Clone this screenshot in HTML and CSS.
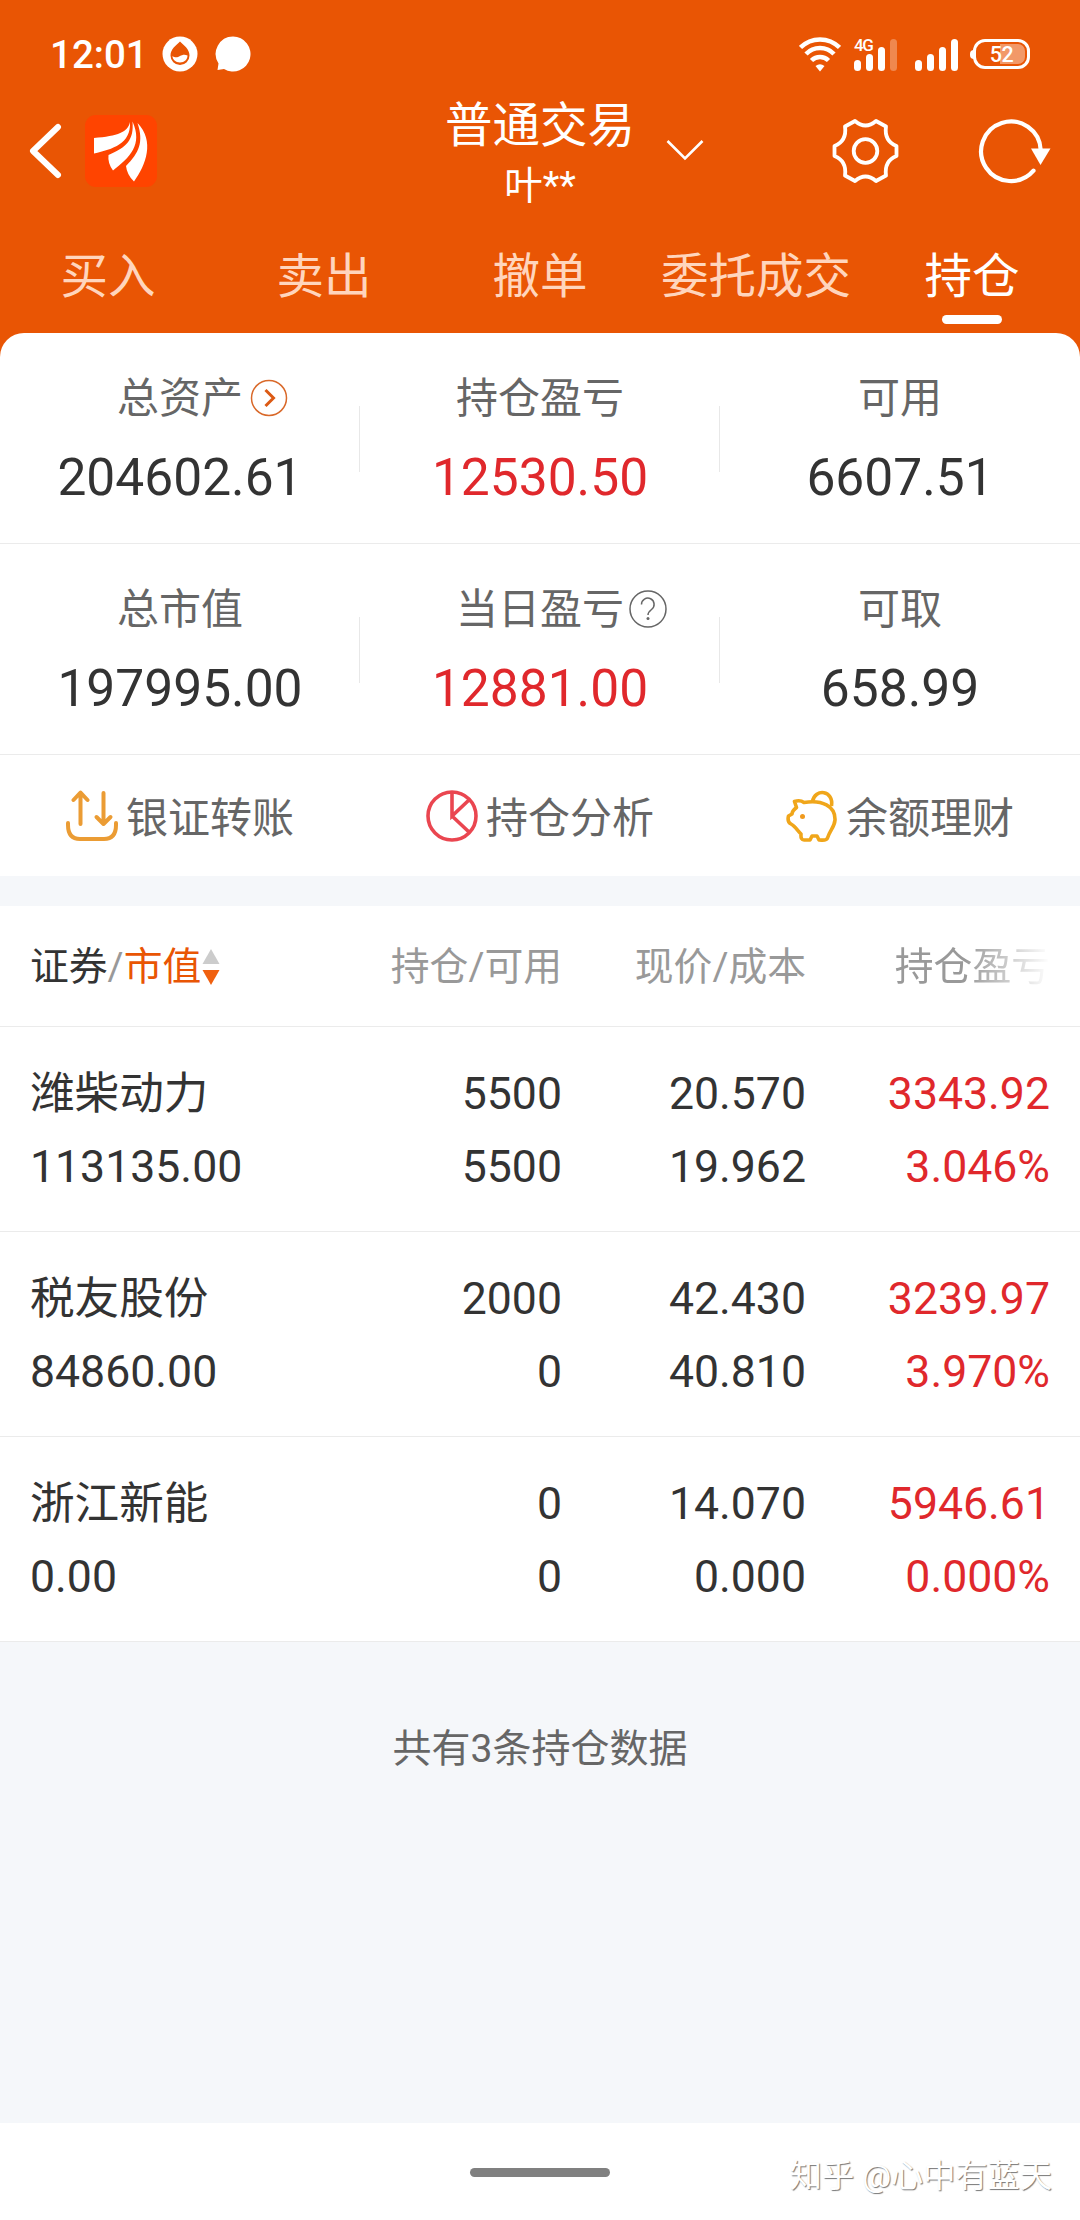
FILE: index.html
```html
<!DOCTYPE html>
<html lang="zh-CN">
<head>
  <meta charset="UTF-8" />
  <meta name="viewport" content="width=device-width, initial-scale=1.0" />
  <title>普通交易 - 持仓</title>
  <link rel="stylesheet" href="styles.css">
</head>
<body>
  <header class="header">
    <div class="status-bar">
      <div class="status-left">
        <span class="clock">12:01</span>
        <svg class="status-dot" viewBox="0 0 36 36">
          <circle cx="18" cy="18" r="17.500" fill="#fff"/>
          <path d="M18 5.500C14 9.500 8.500 13 8.500 19.500a9.500 9.500 0 0 0 19 0C27.500 13 22 9.500 18 5.500z" fill="#e95504"/>
          <path d="M10.500 20c3 2.500 5.500 1 7.500 0s4.500-2 7.500-.5c0 4-3 7-7.500 7s-7.500-3-7.500-6.500z" fill="#fff"/>
        </svg>
        <svg class="status-dot" viewBox="0 0 36 36">
          <path d="M18 .5a17.500 17.500 0 1 1-9 32.500L2.500 34l1-6.500A17.500 17.500 0 0 1 18 .5z" fill="#fff"/>
        </svg>
      </div>
      <div class="status-right">
        <svg class="wifi" viewBox="0 0 42 36">
          <g fill="none" stroke="#fff" stroke-width="4.500">
            <path d="M1.500 11.500a27.500 27.500 0 0 1 39 0"/>
            <path d="M7 18a19.500 19.500 0 0 1 28 0"/>
            <path d="M12.500 24.500a12 12 0 0 1 17 0"/>
          </g>
          <path d="M21 35.500l-4.500-5.500q4.500-3.500 9 0z" fill="#fff"/>
        </svg>
        <div class="signal">
          <span class="net">4G</span>
          <i class="s1"></i><i class="s2"></i><i class="s3"></i><i class="s4 weak"></i>
        </div>
        <div class="signal second">
          <i class="s1"></i><i class="s2"></i><i class="s3"></i><i class="s4"></i>
        </div>
        <div class="battery"><span>52</span></div>
      </div>
    </div>

    <div class="title-bar">
      <div class="title-left">
        <svg class="back" viewBox="0 0 34 56">
          <path d="M30 4L5 28l25 24" fill="none" stroke="#fff" stroke-width="6" stroke-linecap="round" stroke-linejoin="round"/>
        </svg>
        <svg class="logo" viewBox="0 0 72 72">
          <rect width="72" height="72" rx="11" fill="#ff4400"/>
          <path d="M45 7C43 17 33 21 9 23V38.500C28 34 46 29 45 7z" fill="#fff"/>
          <path d="M47.500 6.500C49 25 42 32 23.500 40q-1 8 4.500 15.500C45 42 58 30 47.500 6.500z" fill="#fff"/>
          <path d="M52.500 8C59 27 54 38 41 51q1 9 8 15.500C61 50 70 26 52.500 8z" fill="#fff"/>
        </svg>
      </div>
      <div class="title-center">
        <div class="title">普通交易</div>
        <div class="user">叶**</div>
        <svg class="caret" viewBox="0 0 38 22">
          <path d="M1.500 2L19 19.500 36.500 2" fill="none" stroke="#fff" stroke-width="2.600"/>
        </svg>
      </div>
      <div class="title-right">
        <svg class="gear" viewBox="0 0 68 68">
          <g fill="none" stroke="#fff" stroke-width="3.800" stroke-linejoin="round">
            <circle cx="33.500" cy="34" r="11.800"/>
            <path d="M23 4Q33.500 13 44 4L54 9.500Q52 24 64.500 29V39Q52 44 54 58.500L44 64Q33.500 55 23 64L13 58.500Q15 44 2.500 39V29Q15 24 13 9.500z"/>
          </g>
        </svg>
        <svg class="refresh" viewBox="0 0 74 68">
          <path d="M55.500 53.700A29.800 29.800 0 1 1 62.700 33" fill="none" stroke="#fff" stroke-width="4.200" stroke-linecap="round"/>
          <path d="M53 31.500H72.500L62.500 48z" fill="#fff"/>
        </svg>
      </div>
    </div>

    <nav class="tabs">
      <a class="tab">买入</a>
      <a class="tab">卖出</a>
      <a class="tab">撤单</a>
      <a class="tab">委托成交</a>
      <a class="tab active">持仓</a>
    </nav>
  </header>

  <section class="summary">
    <div class="stats">
      <div class="stat">
        <div class="label">总资产
          <svg class="label-icon more" viewBox="0 0 38 38">
            <circle cx="19" cy="19" r="17.500" fill="none" stroke="#d9692a" stroke-width="1.500"/>
            <path d="M15.500 11l8 8-8 8" fill="none" stroke="#dc5a14" stroke-width="3"/>
          </svg>
        </div>
        <div class="value">204602.61</div>
      </div>
      <div class="stat">
        <div class="label">持仓盈亏</div>
        <div class="value red">12530.50</div>
      </div>
      <div class="stat">
        <div class="label">可用</div>
        <div class="value">6607.51</div>
      </div>
    </div>
    <div class="stats">
      <div class="stat">
        <div class="label">总市值</div>
        <div class="value">197995.00</div>
      </div>
      <div class="stat">
        <div class="label">当日盈亏
          <svg class="label-icon help" viewBox="0 0 38 38">
            <g fill="none" stroke="#666" stroke-width="1.500">
              <circle cx="19" cy="19" r="18"/>
              <path d="M12.500 14.500a6.300 6.300 0 1 1 10 5c-2.500 2-3.500 3-3.500 5.500"/>
            </g>
            <circle cx="19" cy="28.500" r="1.500" fill="#666"/>
          </svg>
        </div>
        <div class="value red">12881.00</div>
      </div>
      <div class="stat">
        <div class="label">可取</div>
        <div class="value">658.99</div>
      </div>
    </div>
    <div class="actions">
      <a class="action">
        <svg viewBox="0 0 52 52">
          <g fill="none" stroke="#eb9c34" stroke-width="4" stroke-linecap="round" stroke-linejoin="round">
            <path d="M2 33v2q0 14 12 14h24q12 0 12-14v-2"/>
            <path d="M14.500 34V3M7.500 10l7-7.500 7 7.500"/>
            <path d="M37.500 3v31M30.500 27l7 7 7-7"/>
          </g>
        </svg>
        <span>银证转账</span>
      </a>
      <a class="action">
        <svg viewBox="0 0 52 52">
          <g fill="none" stroke="#ea4650" stroke-width="3.600">
            <circle cx="26" cy="26" r="24"/>
            <path d="M26 2v24l17.500-16.500M26 26l17.500 16.500"/>
          </g>
        </svg>
        <span>持仓分析</span>
      </a>
      <a class="action">
        <svg viewBox="0 0 52 52">
          <g fill="none" stroke="#f0a61a" stroke-width="3.600" stroke-linejoin="round">
            <path d="M8.500 11.500Q14 9.500 18 12.500C36 9.500 49.500 16 49 30 48.500 37 44 40 41.500 48 40.500 51 37 50 33 50L31 46H26L24 50H18Q14.500 50 15 44C11 40 9 36 5 34Q1 32 2.500 26L6 24Q6 21 10.500 17.500z"/>
            <path d="M26.500 11.500C29-2 48 0 45.500 16"/>
          </g>
          <circle cx="16.500" cy="26.500" r="2.500" fill="#f09a1e"/>
        </svg>
        <span>余额理财</span>
      </a>
    </div>
  </section>

  <section class="holdings">
    <div class="row head">
      <div class="sort"><span class="dark">证券</span>/<span class="orange">市值</span>
        <svg viewBox="0 0 18 36">
          <path d="M9 0l8.500 15H.5z" fill="#ccc"/>
          <path d="M9 36L.5 21h17z" fill="#f0600f"/>
        </svg>
      </div>
      <div>持仓/可用</div>
      <div>现价/成本</div>
      <div class="fade">持仓盈亏</div>
    </div>
    <div class="row">
      <div>潍柴动力<br>113135.00</div>
      <div>5500<br>5500</div>
      <div>20.570<br>19.962</div>
      <div class="red">3343.92<br>3.046%</div>
    </div>
    <div class="row">
      <div>税友股份<br>84860.00</div>
      <div>2000<br>0</div>
      <div>42.430<br>40.810</div>
      <div class="red">3239.97<br>3.970%</div>
    </div>
    <div class="row">
      <div>浙江新能<br>0.00</div>
      <div>0<br>0</div>
      <div>14.070<br>0.000</div>
      <div class="red">5946.61<br>0.000%</div>
    </div>
  </section>

  <p class="total">共有3条持仓数据</p>

  <footer class="nav-bar">
    <div class="home-bar"></div>
    <span class="watermark">知乎 @心中有蓝天</span>
  </footer>
</body>
</html>
```

FILE: styles.css
```css
* {
  box-sizing: border-box;
}
body {
  margin: 0;
  width: 1080px;
  height: 2220px;
  display: flex;
  flex-direction: column;
  font-family: Roboto, 'Noto Sans CJK SC', sans-serif;
  background: #f5f7fa;
  color: #333;
}
svg {
  display: block;
  flex: none;
}
.red {
  color: #e0282c;
}

/* header */
.header {
  height: 357px;
  background: #e95504;
  color: #fff;
}
.status-bar {
  height: 108px;
  padding: 0 50px 0 50px;
  display: flex;
  justify-content: space-between;
  align-items: center;
}
.status-left, .status-right {
  display: flex;
  align-items: center;
}
.clock {
  width: 112px;
  font-size: 38.5px;
  font-weight: 500;
}
.status-dot {
  width: 36px;
  height: 36px;
  margin-right: 17px;
}
.wifi {
  width: 42px;
  height: 36px;
  margin-right: 13px;
}
.signal {
  position: relative;
  display: flex;
  align-items: flex-end;
  gap: 5px;
  height: 33px;
  margin-right: 18px;
}
.signal i {
  width: 7px;
  border-radius: 3.5px;
  background: #fff;
}
.signal.second {
  margin-right: 15px;
}
.s1 { height: 11px; }
.s2 { height: 17px; }
.s3 { height: 24px; }
.s4 { height: 32px; }
.signal .weak {
  opacity: 0.3;
}
.net {
  position: absolute;
  left: 0;
  top: -1px;
  font-size: 17px;
  line-height: 16px;
  font-weight: 500;
  letter-spacing: -1.5px;
}
.battery {
  position: relative;
  width: 57px;
  height: 30px;
  border: 3px solid #fff;
  border-radius: 12px;
  font-size: 21.5px;
  font-weight: 500;
  line-height: 25px;
  text-align: center;
}
.battery span {
  position: relative;
  z-index: 1;
  letter-spacing: -0.5px;
}
.battery::before {
  content: '';
  position: absolute;
  left: -6px;
  top: 8px;
  width: 4px;
  height: 9px;
  border-radius: 4px 0 0 4px;
  background: #fff;
}
.battery::after {
  content: '';
  position: absolute;
  right: 2px;
  top: 2px;
  width: 25px;
  height: 20px;
  border-radius: 0 7px 7px 0;
  background: rgba(255, 255, 255, 0.4);
}

.title-bar {
  height: 114px;
  padding: 0 28px;
  display: grid;
  grid-template-columns: 1fr auto 1fr;
}
.title-left {
  display: flex;
  align-items: center;
  padding-bottom: 28px;
}
.back {
  width: 34px;
  height: 56px;
  margin-right: 23px;
}
.logo {
  width: 72px;
  height: 72px;
}
.title-center {
  position: relative;
  text-align: center;
}
.title {
  margin-top: -8px;
  font-size: 47.5px;
  line-height: 52px;
}
.user {
  margin-top: 12px;
  font-size: 38.5px;
  line-height: 44px;
}
.caret {
  position: absolute;
  left: 221px;
  top: 31px;
  width: 38px;
  height: 22px;
}
.title-right {
  display: flex;
  align-items: center;
  justify-content: flex-end;
  gap: 78px;
  padding-bottom: 28px;
}
.gear {
  width: 68px;
  height: 68px;
}
.refresh {
  width: 74px;
  height: 68px;
}

.tabs {
  display: grid;
  grid-template-columns: repeat(5, 1fr);
  text-align: center;
}
.tab {
  display: flex;
  flex-direction: column;
  align-items: center;
  padding-top: 25px;
  font-size: 47.5px;
  line-height: 60px;
  color: #ffd5bd;
}
.tab.active {
  color: #fff;
}
.tab.active::after {
  content: '';
  width: 60px;
  height: 9px;
  margin-top: 8px;
  border-radius: 5px;
  background: #fff;
}

/* account summary */
.summary {
  margin-top: -24px;
  height: 543px;
  background: #fff;
  border-radius: 24px 24px 0 0;
}
.stats {
  display: grid;
  grid-template-columns: repeat(3, 1fr);
  height: 211px;
  border-bottom: 1px solid #ebebeb;
}
.stat {
  position: relative;
  padding-top: 38px;
  text-align: center;
}
.stat + .stat::before {
  content: '';
  position: absolute;
  left: -1px;
  top: 73px;
  width: 1px;
  height: 66px;
  background: #e8e8e8;
}
.label {
  position: relative;
  width: max-content;
  margin: 0 auto;
  font-size: 42px;
  line-height: 56px;
  color: #666;
}
.label-icon {
  position: absolute;
  top: 8px;
  width: 38px;
  height: 38px;
}
.label-icon.more {
  left: 133px;
}
.label-icon.help {
  left: 173px;
}
.value {
  margin-top: 18px;
  font-size: 51.5px;
  line-height: 66px;
}
.actions {
  display: grid;
  grid-template-columns: repeat(3, 1fr);
  height: 121px;
}
.action {
  display: flex;
  align-items: center;
  gap: 8px;
  padding-left: 66px;
  font-size: 42px;
  color: #666;
}
.action svg {
  width: 52px;
  height: 52px;
}
.action span {
  padding-bottom: 3px;
}

/* holdings table */
.holdings {
  margin-top: 30px;
  background: #fff;
}
.row {
  display: grid;
  grid-template-columns: 1fr 244px 244px 244px;
  height: 205px;
  padding: 31px 30px 0;
  border-bottom: 1px solid #ebebeb;
  font-size: 44.6px;
  line-height: 73px;
  text-align: right;
}
.row > :first-child {
  text-align: left;
}
.row.head {
  height: 121px;
  padding-top: 0;
  font-size: 38.8px;
  line-height: 122px;
  color: #999;
}
.row .sort {
  display: flex;
  align-items: center;
}
.dark {
  color: #333;
}
.orange {
  color: #e95504;
}
.sort svg {
  width: 18px;
  height: 36px;
  margin-left: 1px;
}
.fade {
  -webkit-mask-image: linear-gradient(to right, #000 65%, transparent);
  mask-image: linear-gradient(to right, #000 65%, transparent);
}
.total {
  margin: 79px 0 0;
  text-align: center;
  font-size: 39px;
  line-height: 56px;
  color: #666;
}

/* system navigation */
.nav-bar {
  position: relative;
  display: flex;
  justify-content: center;
  margin-top: auto;
  height: 97px;
  padding-top: 45px;
  background: #fff;
}
.home-bar {
  width: 140px;
  height: 9px;
  border-radius: 5px;
  background: #808080;
}
.watermark {
  position: absolute;
  right: 28px;
  top: 31px;
  font-size: 32.2px;
  line-height: 44px;
  color: #fff;
  text-shadow: 1px 1px 1px #777;
}
```
